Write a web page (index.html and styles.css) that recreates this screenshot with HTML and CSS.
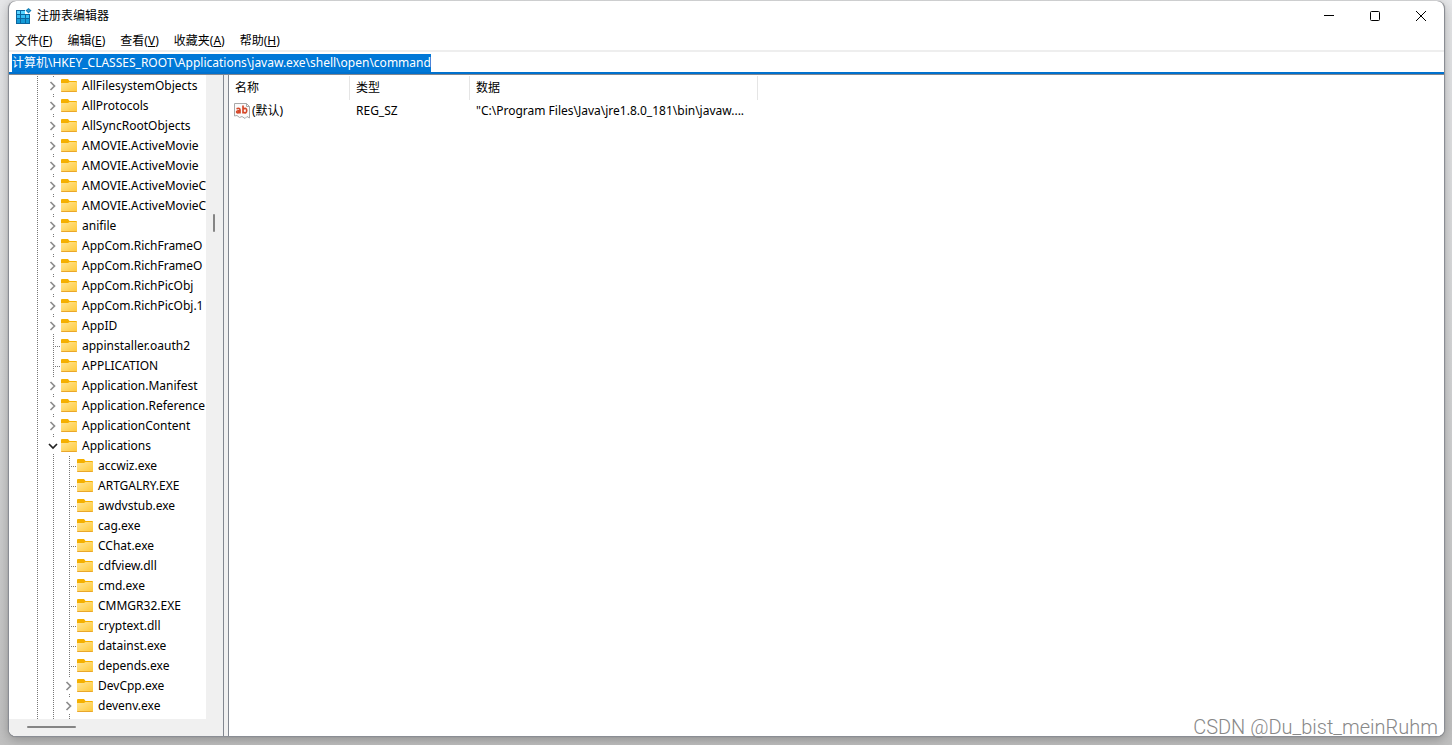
FILE: index.html
```html
<!DOCTYPE html>
<html lang="zh-CN">
<head>
<meta charset="utf-8">
<title>注册表编辑器</title>
<link rel="stylesheet" href="styles.css">
</head>
<body>
<svg class="defs" aria-hidden="true">
  <defs>
    <linearGradient id="fg" x1="0" y1="0" x2="1" y2="1"><stop offset="0" stop-color="#ffe597"/><stop offset="1" stop-color="#ffc937"/></linearGradient>
    <symbol id="folder" viewBox="0 0 16 14">
      <path d="M0 1Q0 0 1 0H7L8.500 2H15Q16 2 16 3V7H0Z" fill="#f5b000"/>
      <path d="M0 4H7L8.500 3H15Q16 3 16 4V12Q16 13 15 13H1Q0 13 0 12Z" fill="url(#fg)"/>
      <path d="M0 12H16Q16 13 15 13H1Q0 13 0 12Z" fill="#e9a72c"/>
    </symbol>
    <symbol id="right" viewBox="0 0 8 10"><path d="M1.500 1L5.500 5L1.500 9" fill="none" stroke="#8c8c8c" stroke-width="1.700"/></symbol>
    <symbol id="down" viewBox="0 0 10 8"><path d="M1 2L5 6L9 2" fill="none" stroke="#222" stroke-width="1.700"/></symbol>
  </defs>
</svg>
<main class="window">
  <header class="titlebar">
    <svg class="app-icon" viewBox="0 0 16 16" aria-hidden="true">
      <path d="M0 2H9V6H14V16H0Z" fill="#0b669f"/>
      <path d="M1 3H4V6H1ZM5 3H9V6H5Z" fill="#58d3ff"/>
      <path d="M1 7H4V10H1ZM5 7H9V10H5ZM10 7H13V10H10Z" fill="#34bdf3"/>
      <path d="M1 11H4V15H1ZM5 11H9V15H5ZM10 11H13V15H10Z" fill="#159bd7"/>
      <path d="M12.500 0L15.500 2.500L12.500 5.500L9.500 2.500Z" fill="#1580b8"/>
      <path d="M12.500 1.500L14 2.600L12.500 4L11 2.600Z" fill="#349dd0"/>
    </svg>
    <h1 class="title">注册表编辑器</h1>
    <div class="controls">
      <button class="control" aria-label="最小化"><svg viewBox="0 0 10 10"><path d="M0 4.500H10"/></svg></button>
      <button class="control" aria-label="最大化"><svg viewBox="0 0 10 10"><rect x=".5" y=".5" width="9" height="9" rx="1"/></svg></button>
      <button class="control" aria-label="关闭"><svg viewBox="0 0 10 10"><path d="M0 0L10 10M10 0L0 10"/></svg></button>
    </div>
  </header>
  <nav class="menu">
    <button class="menu-item">文件(<u>F</u>)</button>
    <button class="menu-item">编辑(<u>E</u>)</button>
    <button class="menu-item">查看(<u>V</u>)</button>
    <button class="menu-item">收藏夹(<u>A</u>)</button>
    <button class="menu-item">帮助(<u>H</u>)</button>
  </nav>
  <div class="address">
    <input class="path" type="text" aria-label="地址" value="计算机\HKEY_CLASSES_ROOT\Applications\javaw.exe\shell\open\command">
  </div>
  <div class="panes">
    <section class="tree-pane" aria-label="注册表项">
      <div class="tree-row">
        <ul class="tree" id="tree"></ul>
        <div class="vbar"><div class="vthumb"></div></div>
      </div>
      <div class="hbar"><div class="hthumb"></div></div>
    </section>
    <section class="values">
      <table class="table">
        <thead><tr><th class="col-name">名称</th><th class="col-type">类型</th><th>数据</th></tr></thead>
        <tbody><tr>
          <td class="name"><div class="value-name">
            <svg class="value-icon" viewBox="0 0 16 16" aria-hidden="true">
              <path d="M.5 .5H12.500L15.500 3.500V15L13 13.500L11 15.500L8 13.500L5.500 14.500L3 12.500L.5 13Z" fill="#fafafa" stroke="#a8a8a8"/>
              <path d="M12.500 .5V3.500H15.500" fill="none" stroke="#a8a8a8"/>
              <g fill="none" stroke="#d6492a" stroke-width="1.700"><path d="M2.500 5.700Q6 4.500 6 7V10.500M6 7.700Q2.500 7.500 2.600 9Q3 10.600 6 9"/><path d="M9 2.500V10.500M9 6Q12.700 4.300 12.700 7.600Q12.700 11 9 9.300"/></g>
            </svg>
            <span>(默认)</span></div></td>
          <td>REG_SZ</td>
          <td>"C:\Program Files\Java\jre1.8.0_181\bin\javaw....</td>
        </tr></tbody>
      </table>
    </section>
  </div>
</main>
<div class="watermark">CSDN @Du_bist_meinRuhm</div>
<script src="tree.js"></script>
</body>
</html>
```
FILE: styles.css
```css
* { box-sizing: border-box; }
body {
  margin: 0;
  min-height: 100vh;
  padding: 1px 7px 8px 8px;
  background: linear-gradient(#e6e7e9, #d4d5d6 50%, #c0c0c0);
  font: 12px/20px "Noto Sans", "Noto Sans CJK SC", sans-serif;
  color: #000;
  overflow: hidden;
}
button { font: inherit; color: inherit; border: 0; padding: 0; background: none; }
.defs { position: absolute; width: 0; height: 0; }
.window {
  display: flex;
  flex-direction: column;
  height: calc(100vh - 9px);
  border: 1px solid #8a8d94;
  border-top: 0;
  border-radius: 8px;
  background: #fff;
  box-shadow: 0 0 1px #777, 0 3px 12px rgba(0, 0, 0, .25);
  overflow: hidden;
}
.titlebar { display: flex; align-items: center; height: 29px; padding-left: 7px; }
.app-icon { width: 16px; height: 16px; }
.title { margin: 0 0 0 5px; font-size: 12px; font-weight: 400; }
.controls { display: flex; margin-left: auto; }
.control { display: flex; align-items: center; justify-content: center; width: 46px; height: 28px; }
.control svg { width: 10px; height: 10px; fill: none; stroke: #000; overflow: visible; }
.menu { display: flex; gap: 15px; height: 20px; padding: 1px 0 0 6px; }
.address { height: 24px; padding: 2px 0 0 3px; border-top: 2px solid #eee; border-bottom: 2px solid #0071ce; }
.path {
  display: block;
  field-sizing: content;
  height: 18px;
  padding: 0;
  border: 0;
  background: #0078d7;
  color: #fff;
  font: inherit;
}
.panes { display: flex; flex: 1; gap: 4px; min-height: 0; background: #f0f0f0; border-top: 1px solid #828790; }
.tree-pane { display: flex; flex-direction: column; width: 215px; border-right: 1px solid #828790; background: #fff; }
.tree-row { display: flex; flex: 1; min-height: 0; }
.tree {
  flex: 1;
  min-width: 0;
  margin: 0;
  padding: 1px 0 0 20px;
  list-style: none;
  overflow: hidden;
}
.node { display: flex; align-items: center; height: 20px; white-space: nowrap; }
.guide, .branch { flex: none; width: 16px; height: 20px; }
.guide { background: repeating-linear-gradient(#777 0 1px, transparent 1px 2px) 8px 0 / 1px 100% no-repeat; }
.branch {
  display: flex;
  align-items: center;
  justify-content: center;
  background:
    linear-gradient(#777, #777) 8px 0 / 1px 1px no-repeat,
    linear-gradient(#777, #777) 8px 18px / 1px 1px no-repeat;
}
.branch.leaf {
  background:
    repeating-linear-gradient(#777 0 1px, transparent 1px 2px) 8px 0 / 1px 100% no-repeat,
    repeating-linear-gradient(90deg, #777 0 1px, transparent 1px 2px) 8px 10px / 8px 1px no-repeat;
}
.right { width: 8px; height: 10px; }
.down { width: 10px; height: 8px; }
.folder { flex: none; width: 16px; height: 14px; margin-right: 5px; }
.node.end { height: 3px; overflow: hidden; align-items: flex-start; }
.vbar { width: 17px; padding: 139px 0 0 7px; background: #f0f0f0; }
.vthumb { width: 2px; height: 18px; border-radius: 1px; background: #858585; }
.hbar { height: 17px; padding: 7px 0 0 18px; background: #f0f0f0; }
.hthumb { width: 49px; height: 2px; border-radius: 1px; background: #858585; }
.values { flex: 1; min-width: 0; background: #fff; border-left: 1px solid #828790; padding-top: 1px; }
.table { width: 529px; table-layout: fixed; border-collapse: separate; border-spacing: 0; }
.table th { height: 24px; padding: 0 0 0 6px; text-align: left; font-weight: 400; border-right: 1px solid #e5e5e5; }
.table td { height: 22px; padding: 0 0 0 6px; white-space: nowrap; }
.table .name { padding-left: 5px; }
.col-name { width: 121px; }
.col-type { width: 120px; }
.value-name { display: flex; align-items: center; gap: 2px; }
.value-icon { width: 16px; height: 16px; }
.watermark {
  position: absolute;
  right: 14px;
  bottom: 6px;
  font: 300 20px/24px Roboto, "Liberation Sans", sans-serif;
  color: #888;
}
```
FILE: tree.js
```js
const keys = [
  "+AllFilesystemObjects", "+AllProtocols", "+AllSyncRootObjects",
  "+AMOVIE.ActiveMovie", "+AMOVIE.ActiveMovie",
  "+AMOVIE.ActiveMovieC", "+AMOVIE.ActiveMovieC",
  "+anifile", "+AppCom.RichFrameO", "+AppCom.RichFrameO",
  "+AppCom.RichPicObj", "+AppCom.RichPicObj.1", "+AppID",
  " appinstaller.oauth2", " APPLICATION", "+Application.Manifest",
  "+Application.Reference", "+ApplicationContent", "-Applications"
];
const children = [
  " accwiz.exe", " ARTGALRY.EXE", " awdvstub.exe", " cag.exe", " CChat.exe",
  " cdfview.dll", " cmd.exe", " CMMGR32.EXE", " cryptext.dll", " datainst.exe",
  " depends.exe", "+DevCpp.exe", "+devenv.exe"
];
const tree = document.getElementById("tree");

function addNode(entry, depth) {
  const state = entry[0];
  const label = entry.slice(1);
  const guides = '<span class="guide"></span>'.repeat(depth);
  const icon = state === "-" ? "down" : "right";
  const branch = state === " "
    ? '<span class="branch leaf"></span>'
    : `<button class="branch" aria-label="${label}"><svg class="${icon}"><use href="#${icon}"/></svg></button>`;
  const item = document.createElement("li");
  item.className = "node";
  item.innerHTML = `${guides}${branch}<svg class="folder"><use href="#folder"/></svg><span>${label}</span>`;
  tree.append(item);
}

keys.forEach(key => addNode(key, 1));
children.forEach(key => addNode(key, 2));

const end = document.createElement("li");
end.className = "node end";
end.innerHTML = '<span class="guide"></span>'.repeat(3);
tree.append(end);
```
